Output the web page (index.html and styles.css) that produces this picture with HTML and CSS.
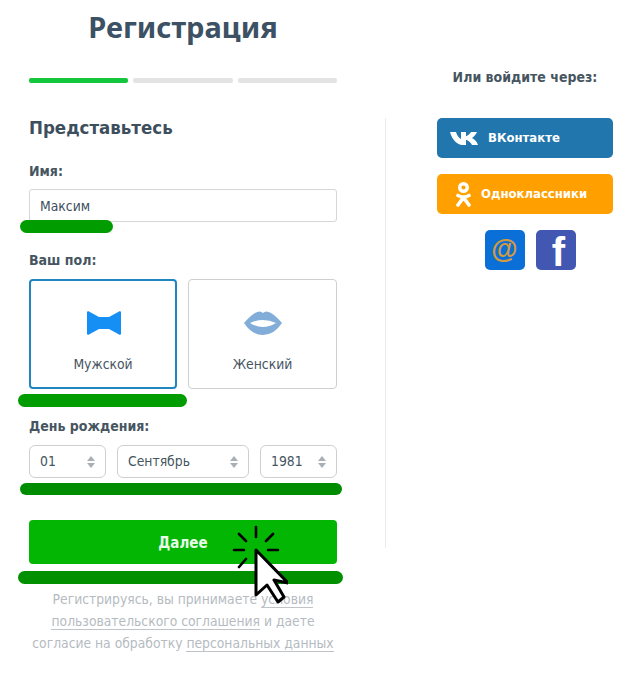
FILE: index.html
```html
<!DOCTYPE html>
<html lang="ru">

<head>
    <meta charset="UTF-8">
    <title>Регистрация</title>
    <link rel="stylesheet" href="styles.css">
</head>

<body>
    <div class="pagina">
        <div class="registro">
            <h1>Регистрация</h1>
            <div class="pasos">
                <span class="paso activo"></span>
                <span class="paso"></span>
                <span class="paso"></span>
            </div>
            <h2>Представьтесь</h2>

            <label class="etiqueta etiqueta-nombre">Имя:</label>
            <div class="campo">Максим</div>

            <label class="etiqueta etiqueta-sexo">Ваш пол:</label>
            <div class="sexos">
                <div class="sexo elegido">
                    <svg width="34" height="24" viewBox="0 0 34 24">
                        <path fill="#168ff5" d="M0 1 L1 0 L12 6 H22 L33 0 L34 1 V23 L33 24 L22 18 H12 L1 24 L0 23 Z" />
                    </svg>
                    <span>Мужской</span>
                </div>
                <div class="sexo">
                    <svg width="38" height="24" viewBox="0 0 38 24">
                        <path fill="#82add8" fill-rule="evenodd" d="M0 12 Q6 5 11 2 Q16 -1 19 2 Q22 -1 27 2 Q32 5 38 12 Q30 24 19 24 Q8 24 0 12 Z M6 12 Q19 20 32 12 Q19 6 6 12 Z" />
                    </svg>
                    <span>Женский</span>
                </div>
            </div>

            <label class="etiqueta etiqueta-fecha">День рождения:</label>
            <div class="fecha">
                <div class="lista lista-dia">01<i class="flechas"></i></div>
                <div class="lista lista-mes">Сентябрь<i class="flechas"></i></div>
                <div class="lista lista-dia">1981<i class="flechas"></i></div>
            </div>

            <button class="btn-siguiente">Далее</button>
            <p class="legal">Регистрируясь, вы принимаете <a>условия пользовательского соглашения</a> и даете согласие на обработку <a>персональных данных</a></p>
        </div>

        <div class="separador"></div>

        <div class="redes">
            <h3>Или войдите через:</h3>
            <a class="red red-vk">
                <svg width="28" height="14" viewBox="0 0 28 16" preserveAspectRatio="none">
                    <path fill="#fff" d="M0 1 H6 C7 5 9 8 11 9 V1 H16 V6 C18 5 20 3 21 1 H27 C26 4 23 7 22 8 C24 9 27 12 28 16 H22 C21 13 18 11 16 10 V16 H14 C7 16 2 10 0 1 Z" />
                </svg>
                <span>ВКонтакте</span>
            </a>
            <a class="red red-ok">
                <svg width="15" height="25" viewBox="0 0 15 25">
                    <circle cx="7.5" cy="5.5" r="3.8" fill="none" stroke="#fff" stroke-width="3.4" />
                    <path fill="none" stroke="#fff" stroke-width="3.6" stroke-linecap="round" d="M2 13.5 Q7.5 16.5 13 13.5 M7.5 15.5 L2 23 M7.5 15.5 L13 23" />
                </svg>
                <span>Одноклассники</span>
            </a>
            <div class="iconos">
                <a class="icono icono-mail">@</a>
                <a class="icono icono-fb">f</a>
            </div>
        </div>

        <span class="marca marca-1"></span>
        <span class="marca marca-2"></span>
        <span class="marca marca-3"></span>
        <span class="marca marca-4"></span>

        <svg class="cursor" width="60" height="80" viewBox="0 0 60 80">
            <g stroke="#000" stroke-width="2.6" fill="none" stroke-linecap="round">
                <path d="M28 2 V12 M6 25 H16 M40 25 H50 M11 9 L18 16 M45 9 L38 16 M11 42 L18 34" />
            </g>
            <path fill="#fff" stroke="#000" stroke-width="3" stroke-linejoin="round" d="M28 25 V70 L39 60 L50 77 L56 72 L46 55 L60 58 Z" />
        </svg>
    </div>
</body>

</html>
```

FILE: styles.css
```css
* {
    box-sizing: border-box;
    margin: 0;
    padding: 0;
}

body {
    background-color: white;
    color: #3d4f5d;
    font-family: "DejaVu Sans Condensed", "DejaVu Sans", sans-serif;
}

.pagina {
    width: 640px;
    height: 680px;
    position: relative;
    display: flex;
    align-items: flex-start;
    overflow: hidden;
    padding-left: 29px;
}

.registro {
    width: 308px;
}

h1 {
    font-family: "Noto Sans", sans-serif;
    font-size: 29px;
    line-height: 32px;
    margin-top: 11px;
    text-align: center;
    color: #3c5163;
}

.pasos {
    display: flex;
    gap: 5px;
    margin-top: 35px;
}

.paso {
    flex: 1;
    height: 5px;
    border-radius: 2px;
    background-color: #e3e3e3;
}

.paso.activo {
    background-color: #14c63c;
}

h2 {
    font-size: 18.5px;
    line-height: 22px;
    margin-top: 34px;
    color: #3d4f5d;
}

.etiqueta {
    display: block;
    font-weight: bold;
    font-size: 14px;
    line-height: 16px;
    color: #46555f;
}

.etiqueta-nombre {
    margin-top: 24px;
}

.etiqueta-sexo {
    margin-top: 30px;
}

.etiqueta-fecha {
    margin-top: 29px;
}

.campo {
    height: 33px;
    margin-top: 10px;
    padding-left: 10px;
    border: 1px solid #d6d6d6;
    border-radius: 3px;
    font-size: 13.8px;
    line-height: 32px;
}

.sexos {
    display: grid;
    grid-template-columns: 148px 149px;
    gap: 11px;
    margin-top: 11px;
}

.sexo {
    height: 110px;
    display: flex;
    flex-direction: column;
    align-items: center;
    border: 1px solid #cfcfcf;
    border-radius: 4px;
    padding-top: 31px;
    font-size: 13.8px;
    color: #46555f;
}

.sexo svg {
    margin-left: 1px;
}

.sexo span {
    margin-top: 21px;
}

.sexo.elegido {
    border: 2px solid #1f86c0;
    padding-top: 30px;
}

.fecha {
    display: flex;
    gap: 11px;
    margin-top: 11px;
}

.lista {
    height: 33px;
    display: flex;
    align-items: center;
    justify-content: space-between;
    padding: 0 10px 2px 10px;
    border: 1px solid #cfcfcf;
    border-radius: 6px;
    font-size: 13.8px;
    color: #46555f;
}

.lista-dia {
    width: 77px;
}

.lista-mes {
    flex: 1;
}

.flechas {
    width: 8px;
    height: 12px;
    margin-top: 2px;
    display: flex;
    flex-direction: column;
    justify-content: space-between;
}

.flechas::before,
.flechas::after {
    content: "";
    height: 0;
    border-left: 4px solid transparent;
    border-right: 4px solid transparent;
}

.flechas::before {
    border-bottom: 5px solid #a9b0b5;
}

.flechas::after {
    border-top: 5px solid #a9b0b5;
}

.btn-siguiente {
    display: block;
    width: 100%;
    height: 44px;
    margin-top: 42px;
    padding-top: 2px;
    border: 0;
    border-radius: 4px;
    background-color: #03b603;
    color: #e8fbe8;
    font-family: "DejaVu Sans Condensed", "DejaVu Sans", sans-serif;
    font-weight: bold;
    font-size: 15px;
}

.legal {
    margin-top: 24px;
    font-size: 13.75px;
    line-height: 22px;
    text-align: center;
    color: #b5bbc1;
}

.legal a {
    border-bottom: 1px solid #c0c4c8;
}

.separador {
    width: 1px;
    height: 430px;
    margin: 118px 0 0 48px;
    background-color: #ececec;
}

.redes {
    width: 176px;
    margin-left: 51px;
    margin-top: 69px;
}

h3 {
    font-size: 14px;
    line-height: 16px;
    text-align: center;
    color: #46555f;
    margin-bottom: 33px;
}

.red {
    height: 40px;
    display: flex;
    align-items: center;
    border-radius: 5px;
    margin-bottom: 16px;
    color: white;
    font-weight: bold;
    font-size: 13px;
}

.red span {
    margin-bottom: 2px;
}

.red-vk {
    gap: 10px;
    padding-left: 13px;
    background-color: #2176ae;
}

.red-ok {
    gap: 10px;
    padding-left: 19px;
    background-color: #ffa000;
}

.iconos {
    display: flex;
    justify-content: center;
    gap: 11px;
    padding-left: 10px;
}

.icono {
    width: 40px;
    height: 40px;
    display: flex;
    align-items: center;
    justify-content: center;
    border-radius: 5px;
    font-family: "Liberation Sans", sans-serif;
}

.icono-mail {
    background-color: #0a6fd6;
    color: #d39b3e;
    font-weight: bold;
    font-size: 27px;
    padding-bottom: 2px;
}

.icono-fb {
    background-color: #4157b2;
    color: white;
    font-weight: bold;
    font-size: 40px;
    padding: 4px 0 0 6px;
}

.marca {
    position: absolute;
    border-radius: 7px;
    background-color: #009c00;
}

.marca-1 {
    left: 20px;
    top: 220px;
    width: 93px;
    height: 13px;
}

.marca-2 {
    left: 18px;
    top: 394px;
    width: 169px;
    height: 13px;
}

.marca-3 {
    left: 20px;
    top: 483px;
    width: 322px;
    height: 12px;
    background-color: #008c00;
}

.marca-4 {
    left: 18px;
    top: 571px;
    width: 325px;
    height: 13px;
    background-color: #009000;
}

.cursor {
    position: absolute;
    left: 228px;
    top: 525px;
}
```
